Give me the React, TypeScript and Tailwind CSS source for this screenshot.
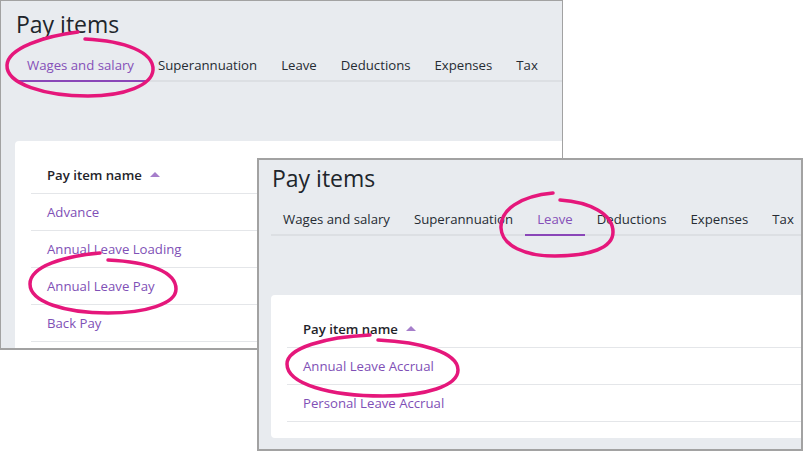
const TABS = ['Wages and salary', 'Superannuation', 'Leave', 'Deductions', 'Expenses', 'Tax'];

interface WindowProps {
  active: string;
  rows: string[];
  className: string;
  padClass: string;
}

function SortUp() {
  return (
    <svg width="10" height="5" viewBox="0 0 10 5" className="ml-2 mb-[8px]">
      <path d="M0 5 L5 0 L10 5 Z" fill="#a67ecb" />
    </svg>
  );
}

function PayItemsWindow({ active, rows, className, padClass }: WindowProps) {
  return (
    <div className={`absolute overflow-hidden bg-[#e8ebef] border-[#a2a2a2] ${className}`}>
      <div className={`w-[780px] ${padClass}`}>
        {/* title */}
        <h1 className="text-[23px] leading-[32px] text-[#20252b] pl-[1px]">Pay items</h1>

        {/* tabs */}
        <div className="mt-[15px] flex border-b-2 border-[#dcdfe3]">
          {TABS.map((tab) => (
            <div
              key={tab}
              className={`px-3 pb-[5px] text-[13.2px] leading-5 -mb-[2px] border-b-2 ${
                tab === active ? 'border-[#8a46b8] text-[#8550b8]' : 'border-transparent text-[#262b33]'
              }`}
            >
              {tab}
            </div>
          ))}
        </div>

        {/* card */}
        <div className="mt-[59px] bg-white rounded px-4 pb-4">
          <div className="flex items-end pt-6 pb-2 px-4 border-b border-[#e4e6e9]">
            <span className="text-[13.2px] leading-5 font-semibold text-[#1f242a]">Pay item name</span>
            <SortUp />
          </div>
          {rows.map((row) => (
            <div key={row} className="px-4 py-2 border-b border-[#e4e6e9] text-[13.2px] leading-5 text-[#8050b6]">
              {row}
            </div>
          ))}
        </div>
      </div>
    </div>
  );
}

export default function App() {
  return (
    <div
      className="relative w-[803px] h-[451px] bg-white overflow-hidden"
      style={{ fontFamily: '"Open Sans", "Noto Sans", sans-serif' }}
    >
      <PayItemsWindow
        active="Wages and salary"
        rows={['Advance', 'Annual Leave Loading', 'Annual Leave Pay', 'Back Pay']}
        className="left-0 top-0 w-[563px] h-[350px] border border-b-2"
        padClass="pt-[7px] pl-[14px]"
      />
      <PayItemsWindow
        active="Leave"
        rows={['Annual Leave Accrual', 'Personal Leave Accrual']}
        className="left-[257px] top-[158px] w-[546px] h-[293px] border-2"
        padClass="pt-[2px] pl-[12px]"
      />

      {/* hand-drawn highlights */}
      <svg className="absolute inset-0 pointer-events-none" width="803" height="451" viewBox="0 0 803 451">
        <g fill="none" stroke="#e5177b" strokeWidth="3.5" strokeLinecap="round">
          <path d="M78,32 C45,36 8,48 7,65 C6,84 45,96 88,96 C125,96 152,85 153,70 C154,52 125,41 85,39" />
          <path d="M100,253 C65,256 30,266 30,284 C30,302 65,313 108,313 C145,313 176,304 176,289 C176,272 150,262 108,260" />
          <path d="M553,193 C520,196 500,210 501,228 C502,246 525,256 555,256 C590,256 613,248 613,232 C613,214 590,202 560,200" />
          <path d="M370,335 C325,337 287,348 287,364 C287,384 330,396 383,396 C425,396 458,386 458,370 C458,352 420,342 378,340" />
        </g>
      </svg>
    </div>
  );
}
